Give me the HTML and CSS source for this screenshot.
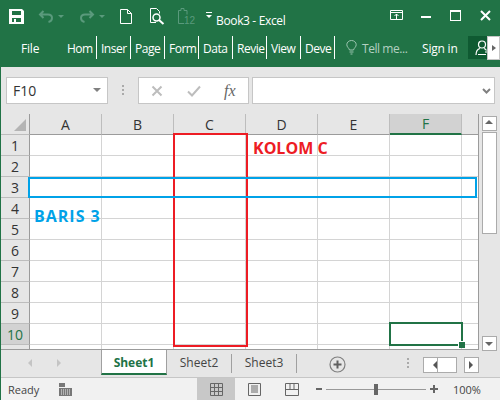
FILE: index.html
```html
<!DOCTYPE html>
<html lang="en">
<head>
  <meta charset="UTF-8" />
  <title>Book3 - Excel</title>
  <link rel="stylesheet" href="styles.css">
</head>
<body>
<div class="window">
  <!-- Title bar -->
  <header class="titlebar">
    <div class="qat">
      <svg class="qat-save" width="15" height="15" viewBox="0 0 15 15"><path fill-rule="evenodd" d="M0 0h13l2 2v13H0zM3 2v4h9V2zM3 9v4h2v-3h2v3h5V9z" fill="#fff"/></svg>
      <svg class="qat-undo" width="16" height="13" viewBox="0 0 16 13"><path d="M5.500 1L2 4.500 5.500 8M2.500 4.500H10c2.500 0 4 1.500 4 3.500 0 2-1.500 3.500-3.500 4" fill="none" stroke="#5a9a7c" stroke-width="2"/></svg>
      <span class="qat-caret"></span>
      <svg class="qat-redo" width="16" height="13" viewBox="0 0 16 13"><path d="M10.500 1L14 4.500 10.500 8M13.500 4.500H6C3.500 4.500 2 6 2 8c0 2 1.500 3.500 3.500 4" fill="none" stroke="#5a9a7c" stroke-width="2"/></svg>
      <span class="qat-caret"></span>
      <svg class="qat-new" width="12" height="15" viewBox="0 0 12 15"><path d="M.5.5h7l4 4v10H.5zM7.500.5v4h4" fill="none" stroke="#fff"/></svg>
      <svg class="qat-preview" width="15" height="17" viewBox="0 0 15 17"><path d="M6 14.500H.5V.5h6l3 3v2" fill="none" stroke="#fff"/><circle cx="6.500" cy="9.500" r="3.500" fill="none" stroke="#fff" stroke-width="1.500"/><path d="M9 12l4.500 4" stroke="#fff" stroke-width="2"/></svg>
      <svg class="qat-sort" width="17" height="17" viewBox="0 0 17 17"><path d="M6 15.500H.5v-13h2.500V.5h3v2h3v4" fill="none" stroke="#5a9a7c"/><text x="6" y="16" font-size="10" fill="#5a9a7c" font-family="Liberation Sans, sans-serif">12</text></svg>
      <span class="qat-more"></span>
    </div>
    <div class="doc-title">Book3 - Excel</div>
    <div class="window-btns">
      <svg width="13" height="11" viewBox="0 0 13 11"><path d="M.5.5h12v9H.5zM.5 2.500h12" fill="none" stroke="#fff"/><path d="M6.500 9V4M4.500 6l2-2 2 2" fill="none" stroke="#fff"/></svg>
      <span class="win-min"></span>
      <span class="win-max"></span>
      <svg width="11" height="11" viewBox="0 0 11 11"><path d="M1 1l9 9M10 1l-9 9" stroke="#fff" stroke-width="2"/></svg>
    </div>
  </header>

  <!-- Ribbon tabs -->
  <nav class="ribbon">
    <span class="tab-file">File</span>
    <span class="tab first">Hom</span>
    <span class="tab">Inser</span>
    <span class="tab">Page</span>
    <span class="tab">Form</span>
    <span class="tab">Data</span>
    <span class="tab">Revie</span>
    <span class="tab">View</span>
    <span class="tab">Deve</span>
    <svg class="bulb" width="11" height="15" viewBox="0 0 11 15"><path d="M3.500 10C3 8 .8 7 .8 4.700a4.700 4.200 0 0 1 9.400 0C10.200 7 8 8 7.500 10zM3.500 12h4M4.500 14h2" fill="none" stroke="#9cc5b0"/></svg>
    <span class="tell">Tell me...</span>
    <span class="signin">Sign in</span>
    <div class="user">
      <svg width="15" height="15" viewBox="0 0 15 15"><circle cx="7" cy="4.500" r="3.500" fill="none" stroke="#fff" stroke-width="1.200"/><path d="M1 15c0-4 2-6 4-6.500M9 8.500c1 .3 2 1 2.500 2M3 14.500h8M10 12h5" fill="none" stroke="#fff" stroke-width="1.200"/></svg>
    </div>
    <div class="ribbon-more"></div>
  </nav>

  <!-- Formula bar -->
  <div class="formula">
    <div class="namebox">F10<span class="caret-down"></span></div>
    <div class="grip"></div>
    <div class="fx-btns">
      <svg width="12" height="12" viewBox="0 0 12 12"><path d="M1.500 1.500l9 9M10.500 1.500l-9 9" stroke="#bdbdbd" stroke-width="2"/></svg>
      <svg width="14" height="12" viewBox="0 0 14 12"><path d="M1 6.500l4 4 8-9" fill="none" stroke="#bdbdbd" stroke-width="2"/></svg>
      <span class="fx">fx</span>
    </div>
    <div class="formula-input">
      <svg width="9" height="6" viewBox="0 0 9 6"><path d="M1 1l3.500 3.500L8 1" fill="none" stroke="#808080" stroke-width="2"/></svg>
    </div>
  </div>

  <!-- Sheet area -->
  <div class="sheet-row">
    <div class="sheet">
      <table class="grid">
        <tr class="col-heads"><th class="corner"><span></span></th><th>A</th><th>B</th><th>C</th><th>D</th><th>E</th><th class="active">F</th><td class="tail"></td></tr>
        <tr><th>1</th><td></td><td></td><td></td><td></td><td></td><td></td><td class="tail"></td></tr>
        <tr><th>2</th><td></td><td></td><td></td><td></td><td></td><td></td><td class="tail"></td></tr>
        <tr><th>3</th><td></td><td></td><td></td><td></td><td></td><td></td><td class="tail"></td></tr>
        <tr><th>4</th><td></td><td></td><td></td><td></td><td></td><td></td><td class="tail"></td></tr>
        <tr><th>5</th><td></td><td></td><td></td><td></td><td></td><td></td><td class="tail"></td></tr>
        <tr><th>6</th><td></td><td></td><td></td><td></td><td></td><td></td><td class="tail"></td></tr>
        <tr><th>7</th><td></td><td></td><td></td><td></td><td></td><td></td><td class="tail"></td></tr>
        <tr><th>8</th><td></td><td></td><td></td><td></td><td></td><td></td><td class="tail"></td></tr>
        <tr><th>9</th><td></td><td></td><td></td><td></td><td></td><td></td><td class="tail"></td></tr>
        <tr><th class="active-row">10</th><td></td><td></td><td></td><td></td><td></td><td></td><td class="tail"></td></tr>
        <tr class="last"><th></th><td></td><td></td><td></td><td></td><td></td><td></td><td class="tail"></td></tr>
      </table>
      <!-- Annotations drawn over the grid -->
      <div class="mark mark-col"></div>
      <div class="mark mark-row"></div>
      <div class="cell-cursor"><span></span></div>
      <div class="label label-col">KOLOM C</div>
      <div class="label label-row">BARIS 3</div>
    </div>
    <div class="vscroll">
      <div class="sb-btn"><i class="up"></i></div>
      <div class="sb-track"></div>
      <div class="sb-btn sb-end"><i class="down"></i></div>
    </div>
  </div>

  <!-- Sheet tabs -->
  <div class="tabs">
    <div class="tab-nav"><i class="nav-left"></i><i class="nav-right"></i></div>
    <div class="sheet-tab current">Sheet1</div>
    <div class="sheet-tab">Sheet2</div>
    <div class="sheet-tab">Sheet3</div>
    <svg class="add-sheet" width="17" height="17" viewBox="0 0 17 17"><circle cx="8.500" cy="8.500" r="7.500" fill="none" stroke="#808080" stroke-width="1.200"/><path d="M8.500 4.500v8M4.500 8.500h8" stroke="#606060" stroke-width="2"/></svg>
    <div class="grip tabs-grip"></div>
    <div class="hscroll">
      <div class="hs-btn"><i class="nav-left dark"></i></div>
      <div class="hs-track"></div>
      <div class="hs-btn end"><i class="nav-right dark"></i></div>
    </div>
  </div>

  <!-- Status bar -->
  <footer class="status">
    <span class="ready">Ready</span>
    <svg class="macro" width="13" height="13" viewBox="0 0 13 13"><rect width="6" height="4" fill="#777"/><rect y="5" width="13" height="8" fill="#777"/><path d="M2 7h9M2 9h9M2 11h9" stroke="#eee" stroke-dasharray="1 1"/></svg>
    <div class="view current-view"><svg width="13" height="13" viewBox="0 0 13 13"><path d="M.5.5h12v12H.5zM4.500.5v12M8.500.5v12M.5 4.500h12M.5 8.500h12" fill="none" stroke="#666"/></svg></div>
    <div class="view"><svg width="13" height="13" viewBox="0 0 13 13"><path d="M.5.5h12v12H.5z" fill="none" stroke="#666"/><path d="M3 3h7M3 5h7M3 7h7M3 9h7" stroke="#666"/></svg></div>
    <div class="view"><svg width="14" height="13" viewBox="0 0 14 13"><path d="M.5.5h13v12H.5zM5 .5v6h4v-6M.5 6.500H5M9 6.500h4.500" fill="none" stroke="#666"/></svg></div>
    <div class="zoom">
      <span class="zoom-minus"></span>
      <div class="zoom-track"><span class="zoom-thumb"></span></div>
      <span class="zoom-plus"></span>
    </div>
    <span class="percent">100%</span>
  </footer>
</div>
</body>
</html>
```

FILE: styles.css
```css
/* Global Styles */
* {
  box-sizing: border-box;
}
html, body {
  margin: 0;
  padding: 0;
}
body {
  font-family: "Open Sans", "Liberation Sans", sans-serif;
  overflow: hidden;
}
.window {
  width: 500px;
  height: 400px;
  display: flex;
  flex-direction: column;
  background: #e6e6e6;
  border-left: 1px solid #217346;
  overflow: hidden;
}
/* Title bar */
.titlebar {
  height: 33px;
  flex-shrink: 0;
  background: #217346;
  color: #fff;
  display: flex;
  align-items: center;
}
.qat {
  display: flex;
  align-items: center;
  padding-left: 8px;
}
.qat svg {
  flex-shrink: 0;
}
.qat-undo { margin-left: 14px; }
.qat-redo { margin-left: 15px; }
.qat-new { margin-left: 15px; }
.qat-preview { margin-left: 18px; }
.qat-sort { margin-left: 13px; }
.qat-caret {
  width: 0;
  height: 0;
  margin-left: 4px;
  border: 3px solid transparent;
  border-top-color: #5a9a7c;
  border-bottom: 0;
}
.qat-more {
  width: 6px;
  height: 6px;
  margin-left: 11px;
  position: relative;
  top: -2px;
  border-top: 1px solid #fff;
}
.qat-more::after {
  content: "";
  position: absolute;
  left: 0;
  top: 2px;
  border: 3px solid transparent;
  border-top-color: #fff;
  border-bottom: 0;
}
.doc-title {
  margin-left: 4px;
  font-size: 12px;
  letter-spacing: -0.35px;
  padding-top: 8px;
  white-space: nowrap;
}
.window-btns {
  display: flex;
  align-items: center;
  margin-left: auto;
  gap: 19px;
  padding-right: 9px;
  margin-top: -3px;
}
.win-min {
  width: 10px;
  height: 2px;
  margin-left: -1px;
  position: relative;
  top: 2px;
  background: #fff;
}
.win-max {
  width: 11px;
  height: 11px;
  border: 1px solid #fff;
  border-top-width: 2px;
}
/* Ribbon tabs */
.ribbon {
  height: 34px;
  flex-shrink: 0;
  background: #217346;
  color: #fff;
  display: flex;
  align-items: center;
  font-size: 12px;
  letter-spacing: -0.2px;
  padding-bottom: 5px;
}
.ribbon > * {
  flex-shrink: 0;
  white-space: nowrap;
}
.tab-file {
  width: 66px;
  padding-left: 20px;
  padding-top: 2px;
}
.tab {
  width: 34px;
  height: 23px;
  line-height: 25px;
  padding-left: 4px;
  letter-spacing: -0.5px;
  border-right: 1px solid #fff;
}
.tab.first {
  width: 30px;
  padding-left: 0;
}
.bulb { margin-left: 11px; }
.tell {
  width: 48px;
  margin-left: 5px;
  padding-top: 2px;
  color: #b3d0c1;
  letter-spacing: -0.45px;
}
.signin {
  width: 36px;
  margin-left: 12px;
  padding-top: 2px;
}
.user {
  width: 19px;
  height: 23px;
  margin-left: 10px;
  background: #0f5a32;
  display: flex;
  align-items: center;
  padding-left: 7px;
  overflow: hidden;
}
.user svg {
  flex-shrink: 0;
}
.ribbon-more {
  width: 13px;
  height: 24px;
  background: #fff;
  border: 1px solid #c6c6c6;
  position: relative;
}
.ribbon-more::after {
  content: "";
  position: absolute;
  left: 4px;
  top: 8px;
  border: 3px solid transparent;
  border-left: 4px solid #666;
  border-right: 0;
}
/* Formula bar */
.formula {
  height: 47px;
  flex-shrink: 0;
  display: flex;
  align-items: flex-start;
  padding: 10px 0 0 5px;
}
.namebox {
  width: 102px;
  height: 27px;
  background: #fff;
  border: 1px solid #c6c6c6;
  font-size: 14px;
  line-height: 25px;
  padding-left: 6px;
  color: #333;
  position: relative;
}
.caret-down {
  position: absolute;
  right: 6px;
  top: 10px;
  border: 4px solid transparent;
  border-top: 4px solid #808080;
  border-bottom: 0;
}
.grip {
  width: 2px;
  height: 11px;
  flex-shrink: 0;
  margin: 8px 14px 0 14px;
  background: repeating-linear-gradient(#aaa 0 2px, transparent 2px 4px);
}
.fx-btns {
  width: 111px;
  height: 27px;
  background: #fff;
  border: 1px solid #c6c6c6;
  display: flex;
  align-items: center;
  gap: 24px;
  padding-left: 12px;
}
.fx {
  font-family: "Liberation Serif", serif;
  font-style: italic;
  font-size: 16px;
  color: #666;
  margin-left: -1px;
}
.formula-input {
  width: 243px;
  height: 27px;
  margin-left: 3px;
  background: #fff;
  border: 1px solid #c6c6c6;
  display: flex;
  align-items: center;
  justify-content: flex-end;
  padding-right: 3px;
}
/* Sheet */
.sheet-row {
  height: 236px;
  flex-shrink: 0;
  display: flex;
}
.sheet {
  width: 478px;
  height: 236px;
  flex-shrink: 0;
  position: relative;
  overflow: hidden;
  background: #fff;
  border-right: 1px solid #9b9b9b;
  border-bottom: 1px solid #9b9b9b;
}
.grid {
  border-collapse: separate;
  border-spacing: 0;
  table-layout: fixed;
  width: 477px;
}
.grid th, .grid td {
  height: 21px;
  padding: 0;
  border-right: 1px solid #d4d4d4;
  border-bottom: 1px solid #d4d4d4;
}
.grid th {
  width: 72px;
  background: #e6e6e6;
  font-weight: normal;
  font-size: 14px;
  color: #333;
  border-color: #bdbdbd;
}
.grid tr th:first-child {
  width: 29px;
  border-right: 1px solid #9b9b9b;
  border-bottom-color: #bdbdbd;
}
.col-heads th, .col-heads td {
  height: 20px;
  border-bottom: 1px solid #9b9b9b;
}
.col-heads .tail {
  background: #e6e6e6;
  border: 0;
  border-bottom: 1px solid #9b9b9b;
}
.grid .tail {
  border-right: 0;
}
.grid .active {
  background: #d2d2d2;
  color: #217346;
  border-bottom: 2px solid #217346;
}
.grid tr .active-row {
  background: #d2d2d2;
  color: #217346;
  border-right: 2px solid #217346;
}
.last th, .last td {
  height: 6px;
  border-bottom: 0;
}
.last th {
  background: #e6e6e6;
}
.corner {
  position: relative;
}
.corner span {
  position: absolute;
  right: 3px;
  bottom: 3px;
  width: 0;
  height: 0;
  border-left: 12px solid transparent;
  border-bottom: 12px solid #b4b4b4;
}
.mark {
  position: absolute;
  border-style: solid;
}
.mark-col {
  left: 172px;
  top: 19px;
  width: 75px;
  height: 214px;
  border-width: 2px;
  border-color: #ed1c24;
}
.mark-row {
  left: 27px;
  top: 63px;
  width: 449px;
  height: 21px;
  border-width: 2px;
  border-color: #00a2e8;
}
.cell-cursor {
  position: absolute;
  left: 388px;
  top: 208px;
  width: 74px;
  height: 24px;
  border: 2px solid #217346;
}
.cell-cursor span {
  position: absolute;
  right: -4px;
  bottom: -4px;
  width: 6px;
  height: 6px;
  background: #217346;
  border-left: 1px solid #fff;
  border-top: 1px solid #fff;
  box-sizing: content-box;
}
.label {
  position: absolute;
  font-family: "Open Sans", sans-serif;
  font-weight: bold;
  font-size: 16px;
  line-height: 18px;
  white-space: nowrap;
}
.label-col {
  left: 252px;
  top: 25px;
  color: #ed1c24;
}
.label-row {
  left: 33px;
  top: 93px;
  color: #00a2e8;
  letter-spacing: 1px;
}
/* Vertical scrollbar */
.vscroll {
  width: 15px;
  height: 235px;
  flex-shrink: 0;
  margin: 2px 0 0 3px;
  display: flex;
  flex-direction: column;
  gap: 1px;
}
.sb-btn {
  height: 15px;
  flex-shrink: 0;
  background: #fff;
  border: 1px solid #ababab;
  position: relative;
}
.sb-end {
  margin-top: auto;
}
.sb-track {
  height: 102px;
  background: #fff;
  border: 1px solid #ababab;
}
.up, .down {
  position: absolute;
  left: 2px;
  border: 4px solid transparent;
}
.up {
  top: 3px;
  border-bottom: 4px solid #666;
  border-top: 0;
}
.down {
  top: 5px;
  border-top: 4px solid #666;
  border-bottom: 0;
}
/* Sheet tabs */
.tabs {
  height: 28px;
  flex-shrink: 0;
  display: flex;
  align-items: flex-start;
  border-bottom: 1px solid #c6c6c6;
  font-size: 12px;
  color: #444;
}
.tab-nav {
  width: 100px;
  flex-shrink: 0;
  display: flex;
  gap: 25px;
  padding: 9px 0 0 27px;
}
.nav-left, .nav-right {
  display: block;
  border: 4px solid transparent;
}
.nav-left {
  border-right: 4px solid #c4c4c4;
  border-left: 0;
}
.nav-right {
  border-left: 4px solid #c4c4c4;
  border-right: 0;
}
.dark.nav-left { border-right-color: #555; }
.dark.nav-right { border-left-color: #555; }
.sheet-tab {
  width: 65px;
  flex-shrink: 0;
  height: 19px;
  margin-top: 4px;
  line-height: 18px;
  text-align: center;
  border-right: 1px solid #a0a0a0;
}
.sheet-tab.current {
  width: 66px;
  height: 25px;
  margin-top: 0;
  background: #fff;
  color: #217346;
  font-weight: bold;
  line-height: 25px;
  border: 1px solid #a0a0a0;
  border-top: 0;
  border-bottom: 2px solid #217346;
}
.add-sheet {
  flex-shrink: 0;
  margin: 6px 0 0 32px;
}
.tabs-grip {
  margin: 8px 0 0 61px;
}
.hscroll {
  display: flex;
  margin: 7px 0 0 14px;
}
.hs-btn {
  width: 15px;
  height: 16px;
  background: #fff;
  border: 1px solid #ababab;
  padding: 3px 0 0 4px;
}
.hs-btn.end { margin-left: 7px; }
.hs-track {
  width: 19px;
  height: 16px;
  background: #fff;
  border: 1px solid #ababab;
  border-left: 0;
}
/* Status bar */
.status {
  flex: 1;
  display: flex;
  align-items: center;
  background: #f1f1f1;
  font-size: 11px;
  color: #444;
}
.status > * {
  flex-shrink: 0;
}
.ready {
  width: 31px;
  margin-left: 7px;
}
.macro { margin-left: 20px; }
.view {
  width: 38px;
  height: 100%;
  display: flex;
  align-items: center;
  justify-content: center;
}
.current-view {
  margin-left: 125px;
  background: #c8c8c8;
}
.zoom {
  display: flex;
  align-items: center;
  margin-left: 5px;
}
.zoom-minus {
  width: 6px;
  height: 2px;
  background: #666;
}
.zoom-track {
  width: 100px;
  height: 1px;
  margin: 0 4px;
  background: #999;
  position: relative;
}
.zoom-thumb {
  position: absolute;
  left: 48px;
  top: -5px;
  width: 4px;
  height: 11px;
  background: #666;
}
.zoom-plus {
  width: 8px;
  height: 8px;
  background: linear-gradient(#666,#666) center/8px 2px no-repeat, linear-gradient(#666,#666) center/2px 8px no-repeat;
}
.percent {
  margin-left: 15px;
}
```
